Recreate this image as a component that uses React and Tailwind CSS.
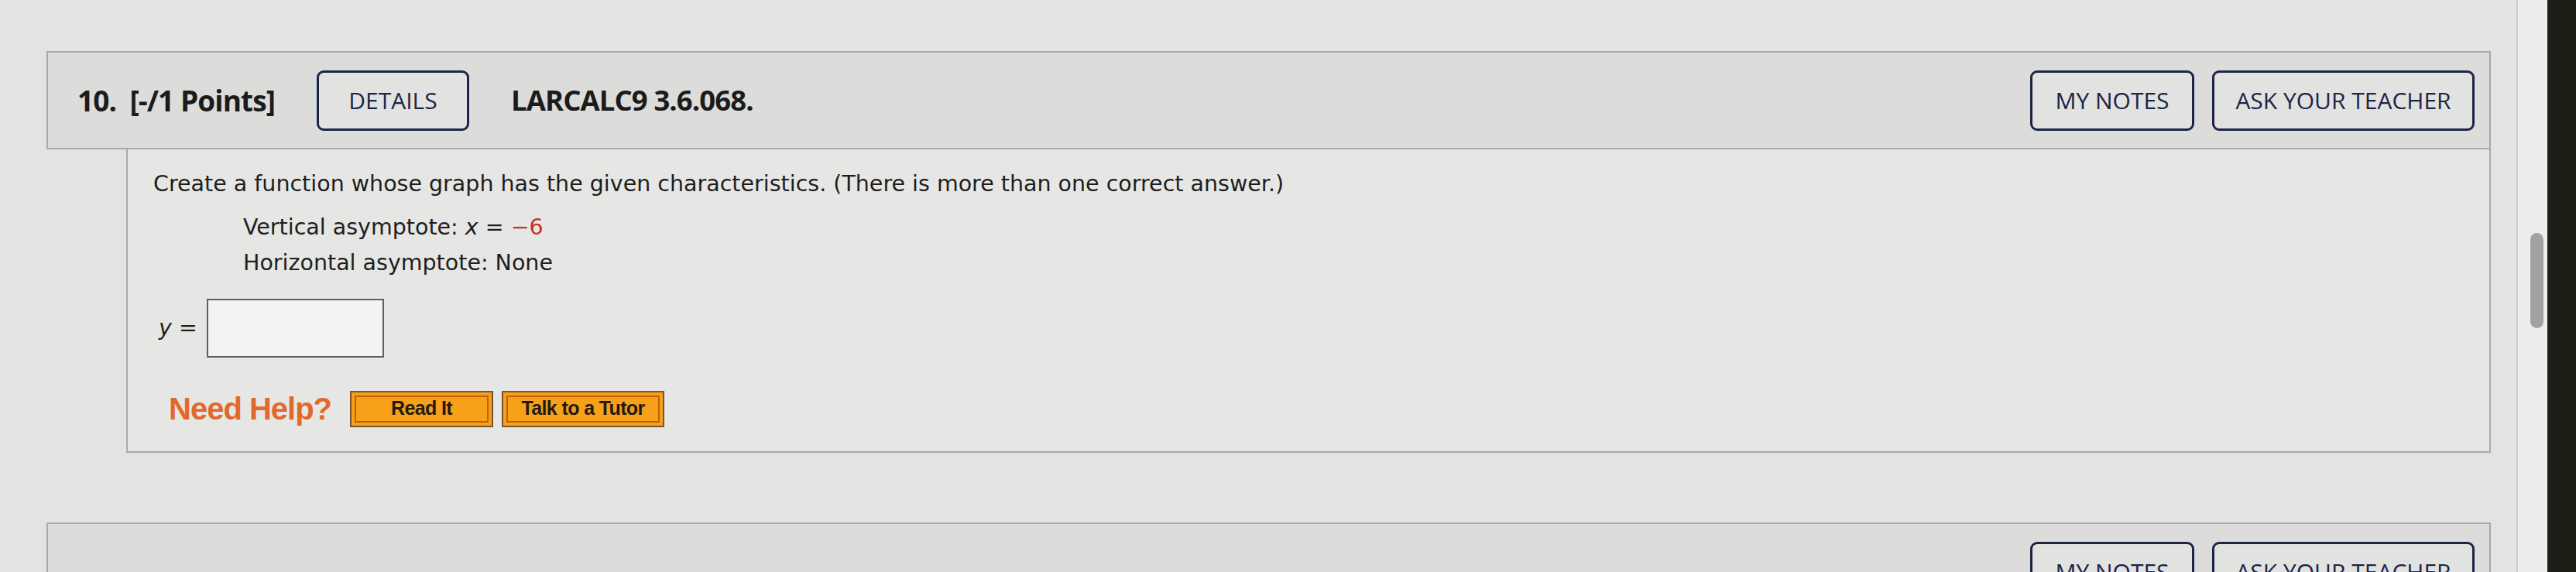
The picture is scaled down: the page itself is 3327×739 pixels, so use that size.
import React from 'react'

const head = { fontFamily: '"Open Sans", "Liberation Sans", sans-serif' }
const body = { fontFamily: '"DejaVu Sans", Verdana, sans-serif' }
const help = { fontFamily: '"Liberation Sans", Arial, sans-serif' }

function OutlineButton({ children, className }) {
  return (
    <button
      type="button"
      className={`flex h-[78px] items-center justify-center rounded-[9px] border-[3px] border-[#1c2547] bg-[#e2e2e0] text-[30px] text-[#1c2547] ${className}`}
      style={head}
    >
      {children}
    </button>
  )
}

function HelpButton({ children, className }) {
  return (
    <button
      type="button"
      className={`flex h-[47px] items-center justify-center border-2 border-[#7d5230] bg-[#f7a01a] p-[4px] ${className}`}
    >
      <span
        className="flex h-full w-full items-center justify-center border-2 border-[#c25f00] text-[25px] font-bold tracking-tight text-[#231a10]"
        style={help}
      >
        {children}
      </span>
    </button>
  )
}

function QuestionHeader({ showLeft }) {
  return (
    <div className="flex h-[127px] items-center border-2 border-[#a9a9a7] bg-[#dcdcda] pl-[38px] pr-[19px]" style={head}>
      {showLeft && (
        <>
          <span className="text-[37px] font-bold tracking-tight text-[#1b1b1b]">10.&nbsp; [-/1 Points]</span>
          <OutlineButton className="ml-[54px] w-[197px]">DETAILS</OutlineButton>
          <span className="ml-[54px] text-[36.5px] font-bold tracking-tight text-[#1b1b1b]">LARCALC9 3.6.068.</span>
        </>
      )}
      <div className="ml-auto flex gap-[23px]">
        <OutlineButton className="w-[212px]">MY NOTES</OutlineButton>
        <OutlineButton className="w-[339px]">ASK YOUR TEACHER</OutlineButton>
      </div>
    </div>
  )
}

export default function App() {
  return (
    <div className="flex h-[739px] w-[3327px] overflow-hidden bg-[#e3e3e1]">
      <main className="flex-1 pl-[60px] pr-[33px] pt-[66px]">
        <QuestionHeader showLeft />
        <div className="ml-[103px] h-[392px] border-2 border-t-0 border-[#a9a9a7] bg-[#e6e6e4] pl-[33px] pt-[26px] text-[28.5px] text-[#1e1e1e]" style={body}>
          <p className="leading-[38px]">
            Create a function whose graph has the given characteristics. (There is more than one correct answer.)
          </p>
          <div className="ml-[116px] mt-[14px] leading-[46px]">
            <p>
              Vertical asymptote: <i>x</i> = <span className="text-[#c8302a]">−6</span>
            </p>
            <p>Horizontal asymptote: None</p>
          </div>
          <div className="mt-[23px] flex items-center">
            <span className="ml-[7px] w-[62px]">
              <i>y</i> =
            </span>
            <div className="h-[76px] w-[229px] border-2 border-[#5f5f5f] bg-[#f3f3f1]" />
          </div>
          <div className="mt-[36px] flex items-center">
            <span className="ml-[20px] text-[40px] font-bold tracking-tight text-[#e2692a]" style={help}>
              Need Help?
            </span>
            <HelpButton className="ml-[24px] w-[185px]">Read It</HelpButton>
            <HelpButton className="ml-[11px] w-[210px]">Talk to a Tutor</HelpButton>
          </div>
        </div>
        <div className="mt-[90px]">
          <QuestionHeader />
        </div>
      </main>
      <div className="w-[40px] border-l-2 border-[#cdcdcb] bg-[#ececea] pl-[16px] pt-[301px]">
        <div className="h-[123px] w-[17px] rounded-full bg-[#a2a2a0]" />
      </div>
      <div className="w-[37px] bg-[#1e1d16]" />
    </div>
  )
}
